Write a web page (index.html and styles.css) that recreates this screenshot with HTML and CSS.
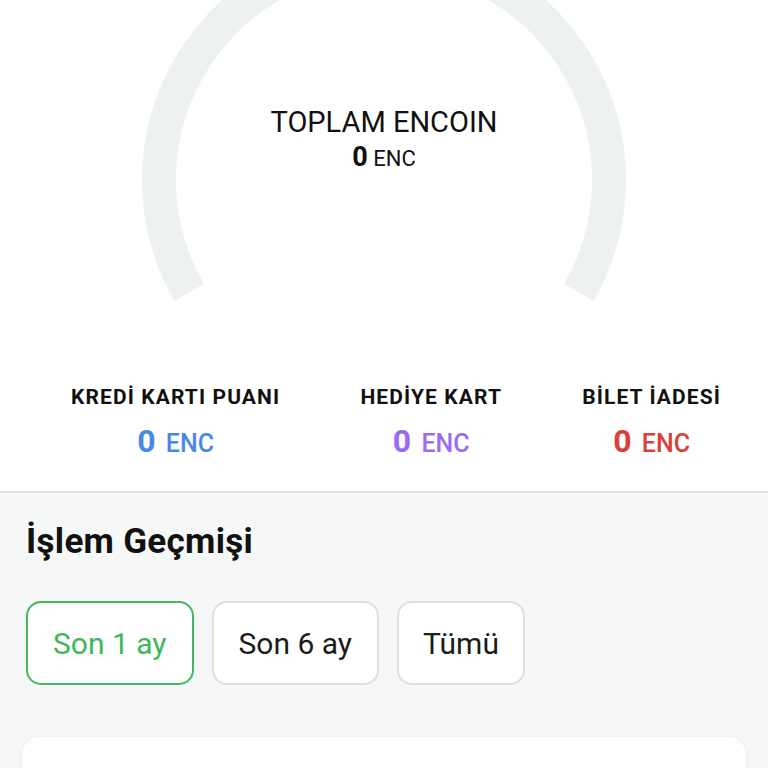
FILE: index.html
```html
<!DOCTYPE html>
<html lang="tr">
<head>
	<meta charset="UTF-8">
	<title>Encoin</title>
	<link rel="stylesheet" href="styles.css">
</head>
<body>
	<div class="gauge">
		<svg class="ring" width="768" height="340" viewBox="0 0 768 340">
			<path d="M189.14 292.5 A225 225 0 1 1 578.86 292.5" fill="none" stroke="#eef1f1" stroke-width="34"/>
		</svg>
		<div class="total">
			<div class="total_title">TOPLAM ENCOIN</div>
			<div class="total_value"><b>0</b> ENC</div>
		</div>
	</div>
	<ul class="stats">
		<li>
			<span class="stat_label">KREDİ KARTI PUANI</span>
			<span class="stat_value blue"><b>0</b> ENC</span>
		</li>
		<li>
			<span class="stat_label">HEDİYE KART</span>
			<span class="stat_value purple"><b>0</b> ENC</span>
		</li>
		<li>
			<span class="stat_label">BİLET İADESİ</span>
			<span class="stat_value red"><b>0</b> ENC</span>
		</li>
	</ul>
	<div class="history">
		<h2>İşlem Geçmişi</h2>
		<div class="filters">
			<button class="filter active">Son 1 ay</button>
			<button class="filter">Son 6 ay</button>
			<button class="filter">Tümü</button>
		</div>
		<div class="card"></div>
	</div>
</body>
</html>
```

FILE: styles.css
```css
*{
	margin: 0;
	padding: 0;
	box-sizing: border-box;
}
body{
	width: 768px;
	height: 768px;
	overflow: hidden;
	background: #fff;
	font-family: Roboto, "Liberation Sans", sans-serif;
	color: #111;
}
ul{
	list-style-type: none;
}
.gauge{
	position: relative;
	height: 378px;
}
.ring{
	position: absolute;
	left: 0;
	top: 0;
}
.total{
	position: relative;
	padding-top: 105px;
	text-align: center;
}
.total_title{
	font-size: 29px;
	line-height: 34px;
}
.total_value{
	font-size: 22px;
	line-height: 36px;
}
.total_value b{
	font-size: 27px;
	font-weight: 700;
}
.stats{
	display: flex;
	justify-content: space-between;
	padding: 0 47px 30px 71px;
	border-bottom: 2px solid #e2e4e4;
}
.stats li{
	display: flex;
	flex-direction: column;
	align-items: center;
}
.stat_label{
	font-size: 21px;
	font-weight: 700;
	line-height: 38px;
	letter-spacing: 1.1px;
}
.stat_value{
	margin-top: 8px;
	font-size: 25px;
	font-weight: 500;
	line-height: 34px;
}
.stat_value b{
	font-size: 32px;
	font-weight: 700;
	margin-right: 4px;
}
.blue{ color: #4a88e6; }
.purple{ color: #9a6cf2; }
.red{ color: #d8413b; }
.history{
	background: #f6f7f7;
	padding: 27px 22px 0 22px;
	height: 275px;
	overflow: hidden;
}
.history h2{
	margin-left: 4px;
	font-size: 35px;
	font-weight: 700;
	line-height: 44px;
	letter-spacing: 0.3px;
}
.filters{
	display: flex;
	gap: 18px;
	margin: 37px 0 0 4px;
}
.filter{
	height: 84px;
	padding: 0 25px;
	background: #fff;
	border: 2px solid #dedfdf;
	border-radius: 15px;
	font-family: inherit;
	font-size: 30px;
	color: #1b1b1b;
}
.filter:last-child{
	padding: 0 24px;
}
.filter.active{
	border-color: #43b85c;
	color: #3fb65a;
}
.card{
	margin-top: 52px;
	height: 120px;
	background: #fff;
	border-radius: 18px;
	box-shadow: 0 0 4px rgba(0,0,0,0.06);
}
```
